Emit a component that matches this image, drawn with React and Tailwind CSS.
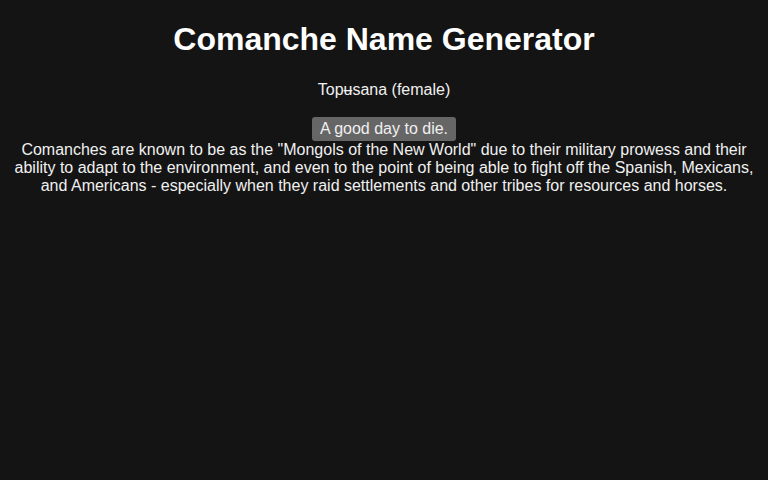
import React from 'react';

const App = () => {
  return (
    <div className="min-h-screen w-full bg-[#141414] text-white text-center font-['Liberation_Sans',Arial,sans-serif]">
      <h1 className="pt-[21px] text-[32px] leading-[37px] font-bold">Comanche Name Generator</h1>

      {/* generated name */}
      <p className="mt-[23px] text-base leading-[18px] text-[#f0f0f0]">Topʉsana (female)</p>

      <button className="mt-[18px] px-2 h-[24px] rounded-[3px] bg-[#666666] text-base leading-[24px] text-[#f0f0f0]">
        A good day to die.
      </button>

      <p className="mt-0 px-3 text-base leading-[18px] text-[#f0f0f0]">
        Comanches are known to be as the "Mongols of the New World" due to their military prowess and their
        ability to adapt to the environment, and even to the point of being able to fight off the Spanish, Mexicans,
        and Americans - especially when they raid settlements and other tribes for resources and horses.
      </p>
    </div>
  );
};

export default App;
